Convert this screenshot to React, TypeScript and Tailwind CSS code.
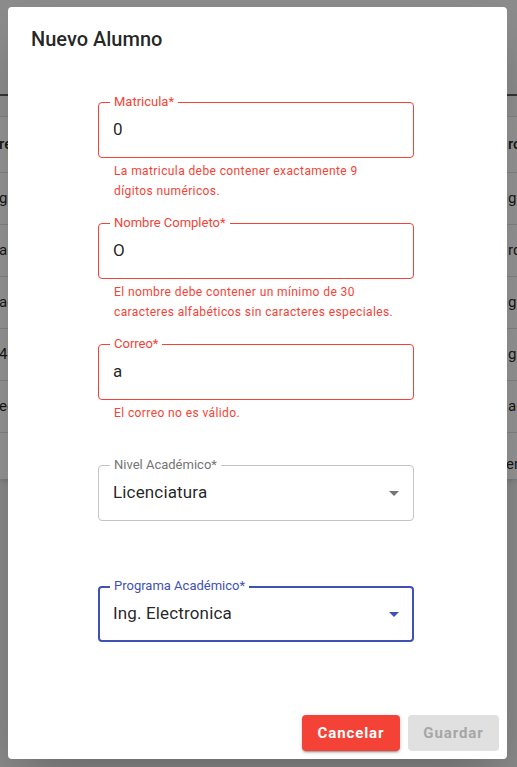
import React from 'react';

interface FieldProps {
  label: string;
  value: string;
  helper?: string[];
  error?: boolean;
  focused?: boolean;
  select?: boolean;
}

// rows of the table that sits behind the dialog (only the edges show)
const ROWS: { left: string; right: string; h: string; bold?: boolean }[] = [
  { left: 'registro', right: 'ro', h: 'h-[56px]', bold: true },
  { left: 'gonzalez', right: 'g', h: 'h-[52px]' },
  { left: 'a(', right: 'rq', h: 'h-[52px]' },
  { left: 'acosta', right: 'g', h: 'h-[52px]' },
  { left: '4', right: 'g', h: 'h-[52px]' },
  { left: 'ec', right: 'ac', h: 'h-[52px]' },
];

function ArrowDrop({ color }: { color: string }) {
  return (
    <svg viewBox="0 0 24 24" className="h-6 w-6 shrink-0" fill={color}>
      <path d="M7 10l5 5 5-5z" />
    </svg>
  );
}

function Field({ label, value, helper, error, focused, select }: FieldProps) {
  const boxTone = error
    ? 'border border-[#f44336] px-[14px] pr-[7px]'
    : focused
      ? 'border-2 border-[#3f51b5] px-[13px] pr-[6px]'
      : 'border border-[#c4c4c4] px-[14px] pr-[7px]';
  const labelTone = error ? 'text-[#f44336]' : focused ? 'text-[#3f51b5]' : 'text-[#757575]';

  return (
    <div className="h-[121px] w-[316px]">
      <div className="relative">
        <div className={`flex h-[56px] items-center justify-between rounded-[4px] ${boxTone}`}>
          <span className="text-[17px] tracking-[0.15px] text-black/[0.87]">{value}</span>
          {select && <ArrowDrop color={focused ? '#3f51b5' : '#757575'} />}
        </div>
        <span className={`absolute left-[12px] top-[-8px] bg-white px-[4px] text-[13px] leading-[16px] ${labelTone}`}>
          {label}
        </span>
      </div>
      {helper && (
        <div className="ml-[16px] mt-[3px] text-[12px] leading-[20px] tracking-[0.4px] text-[#f44336]">
          {helper.map(line => (
            <div key={line} className="whitespace-nowrap">{line}</div>
          ))}
        </div>
      )}
    </div>
  );
}

export default function App() {
  return (
    <div className="relative h-[767px] w-[517px] overflow-hidden bg-[#ececec] font-['Roboto','Liberation_Sans',sans-serif]">
      {/* ── Page behind ─────────────────────────────────────────────────── */}
      <div className="h-[96px] border-b-2 border-[#5a5a5a] bg-[#f2f2f2]" />
      <div className="bg-white shadow-md">
        <div className="h-[21px] border-b border-[#e0e0e0] bg-[#f7f7f7]" />
        {ROWS.map(r => (
          <div
            key={r.left + r.right}
            className={`grid grid-cols-[508px_1fr] items-center border-b border-[#e0e0e0] text-[15px] text-black/[0.87] ${r.h} ${r.bold ? 'font-medium' : ''}`}
          >
            <span className="-ml-[1px] whitespace-nowrap">{r.left}</span>
            <span className="whitespace-nowrap">{r.right}</span>
          </div>
        ))}
        <div className="grid h-[46px] grid-cols-[508px_1fr] items-end pb-[4px] text-[15px] text-black/[0.87]">
          <span />
          <span className="-ml-[2px]">en</span>
        </div>
      </div>

      {/* ── Backdrop ────────────────────────────────────────────────────── */}
      <div className="absolute inset-0 bg-black/[0.42]" />

      {/* ── Dialog ──────────────────────────────────────────────────────── */}
      <div className="absolute left-[8px] top-[7px] flex h-[752px] w-[499px] flex-col rounded-[4px] bg-white shadow-2xl">
        <h2 className="h-[64px] px-[23px] pt-[16px] text-[20px] font-medium leading-[32px] text-black/[0.87]">
          Nuevo Alumno
        </h2>

        <div className="ml-[90px] mt-[31px] flex flex-col">
          <Field
            label="Matricula*"
            value="0"
            error
            helper={['La matricula debe contener exactamente 9', 'dígitos numéricos.']}
          />
          <Field
            label="Nombre Completo*"
            value="O"
            error
            helper={['El nombre debe contener un mínimo de 30', 'caracteres alfabéticos sin caracteres especiales.']}
          />
          <Field label="Correo*" value="a" error helper={['El correo no es válido.']} />
          <Field label="Nivel Académico*" value="Licenciatura" select />
          <Field label="Programa Académico*" value="Ing. Electronica" select focused />
        </div>

        <div className="mt-auto flex justify-end gap-2 p-2">
          <button className="h-[36px] w-[98px] rounded-[4px] bg-[#f44336] text-[15px] font-bold tracking-[0.9px] text-white shadow-[0_3px_1px_-2px_rgba(0,0,0,0.2),0_2px_2px_0_rgba(0,0,0,0.14),0_1px_5px_0_rgba(0,0,0,0.12)]">
            Cancelar
          </button>
          <button disabled className="h-[36px] w-[91px] rounded-[4px] bg-[#e0e0e0] text-[15px] font-bold tracking-[0.9px] text-[#a6a6a6]">
            Guardar
          </button>
        </div>
      </div>
    </div>
  );
}
